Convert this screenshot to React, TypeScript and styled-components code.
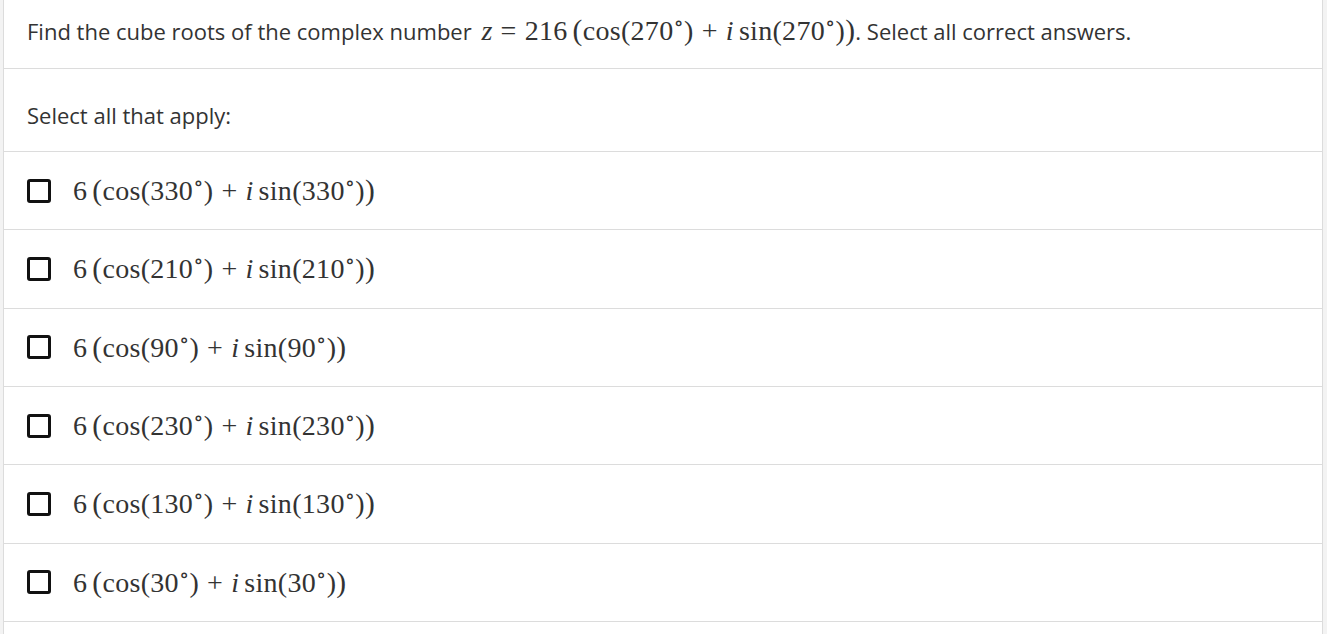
import React from 'react';
import styled, { createGlobalStyle } from 'styled-components';

const GlobalStyle = createGlobalStyle`
  html, body {
    margin: 0;
    padding: 0;
    background: #f3f3f3;
  }
  body {
    font-family: 'Open Sans', 'Liberation Sans', sans-serif;
    color: #333;
  }
`;

const answers = ['330', '210', '90', '230', '130', '30'];

function Expr({ angle, coef }: { angle: string; coef: string }) {
  return (
    <>
      {coef}
      <Thin />
      <Paren>(</Paren>cos(<Deg angle={angle} />)<Bin>+</Bin>
      <Var>i</Var>
      <Thin />
      sin(<Deg angle={angle} />)<Paren>)</Paren>
    </>
  );
}

function Deg({ angle }: { angle: string }) {
  return (
    <>
      {angle}
      <Sup>∘</Sup>
    </>
  );
}

function App() {
  return (
    <Page>
      <GlobalStyle />
      <Card>
        <Question>
          Find the cube roots of the complex number&nbsp;
          <MathText $inline>
            <Var>z</Var>
            <Bin>=</Bin>
            <Expr coef="216" angle="270" />
          </MathText>
          . Select all correct answers.
        </Question>

        <Prompt>Select all that apply:</Prompt>

        <Options>
          {answers.map((a) => (
            <Option key={a}>
              <Box />
              <MathText>
                <Expr coef="6" angle={a} />
              </MathText>
            </Option>
          ))}
        </Options>
      </Card>
    </Page>
  );
}

const Page = styled.div`
  padding-left: 3px;
  width: 1324px;
  min-height: 634px;
  box-sizing: border-box;
`;

const Card = styled.div`
  width: 1320px;
  box-sizing: border-box;
  background: #fff;
  border-left: 1px solid #dcdcdc;
  border-right: 1px solid #dcdcdc;
  min-height: 640px;
`;

const Question = styled.div`
  height: 69px;
  box-sizing: border-box;
  padding: 15px 23px 0;
  font-size: 22px;
  line-height: 30px;
  border-bottom: 1px solid #dcdcdc;
  white-space: nowrap;
`;

const Prompt = styled.div`
  height: 83px;
  box-sizing: border-box;
  padding: 31px 23px 0;
  font-size: 22px;
  line-height: 30px;
  border-bottom: 1px solid #dcdcdc;
`;

const Options = styled.div`
  display: flex;
  flex-direction: column;
`;

const Option = styled.div`
  display: flex;
  align-items: center;
  gap: 22px;
  height: 78.33px;
  box-sizing: border-box;
  padding: 0 23px;
  border-bottom: 1px solid #dcdcdc;
`;

const Box = styled.span`
  width: 24px;
  height: 24px;
  box-sizing: border-box;
  border: 3px solid #111;
  border-radius: 3px;
  flex-shrink: 0;
`;

const MathText = styled.span<{ $inline?: boolean }>`
  font-family: 'Liberation Serif', 'DejaVu Serif', serif;
  font-size: 28px;
  letter-spacing: 0.3px;
  color: #333;
  white-space: nowrap;
  margin-left: ${(p) => (p.$inline ? '4px' : '0')};
`;

const Var = styled.span`
  font-style: italic;
`;

const Bin = styled.span`
  margin: 0 8px;
`;

const Thin = styled.span`
  display: inline-block;
  width: 5px;
`;

const Paren = styled.span`
  font-size: 1.05em;
`;

const Sup = styled.sup`
  font-size: 0.75em;
  line-height: 0;
  vertical-align: 0.5em;
`;

export default App;
